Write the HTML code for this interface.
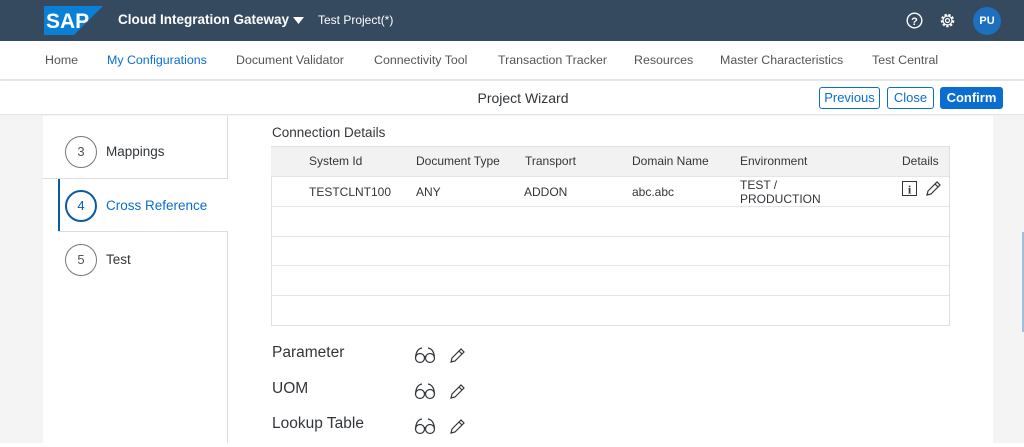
<!DOCTYPE html>
<html><head><meta charset="utf-8"><style>
*{box-sizing:border-box;margin:0;padding:0}
body{width:1024px;height:447px;overflow:hidden;font-family:"Liberation Sans",sans-serif;background:#f4f4f4;position:relative;color:#32363a}
.hdr{position:absolute;left:0;top:0;width:1024px;height:41px;background:#354a5f;color:#fff}
.nav{position:absolute;left:0;top:41px;width:1024px;height:39px;background:#fff;border-bottom:1px solid #e4e4e4;box-shadow:0 1px 2px rgba(0,0,0,.08);font-size:12.4px;color:#555}
.nav span{position:absolute;top:12px}
.ttl{position:absolute;left:0;top:81px;width:1024px;height:34px;background:#fff;border-bottom:1px solid #e4e4e4}
.btn{position:absolute;top:87px;height:22px;border:1px solid #0a6ed1;border-radius:3px;font-size:13px;color:#0a6ed1;text-align:center;line-height:20px}
.card{position:absolute;left:43px;top:116px;width:950px;height:327px;background:#fff}
.t{position:absolute;font-size:12px;color:#32363a}
.circ{position:absolute;width:32px;height:32px;border:1px solid #777;border-radius:50%;text-align:center;line-height:30px;font-size:13px;color:#555}
.row{position:absolute;left:271px;width:678px;border-bottom:1px solid #e5e5e5}
</style></head><body>
<div class="hdr">
<svg style="position:absolute;left:44px;top:6px" width="59" height="29"><polygon points="0,0 59,0 30,29 0,29" fill="#0a7fd8"/><text x="2" y="22" font-family="Liberation Sans" font-weight="bold" font-size="21" fill="#fff">SAP</text></svg>
<div style="position:absolute;left:118px;top:12px;font-size:13.5px;font-weight:bold">Cloud Integration Gateway</div>
<svg style="position:absolute;left:293px;top:17px" width="11" height="7"><polygon points="0,0 11,0 5.5,7" fill="#fff"/></svg>
<div style="position:absolute;left:318px;top:13px;font-size:12px">Test Project(*)</div>
<svg style="position:absolute;left:906px;top:12px" width="17" height="17"><circle cx="8.5" cy="8.5" r="7.3" fill="none" stroke="#fff" stroke-width="1.4"/><text x="8.5" y="13" text-anchor="middle" font-size="11" font-weight="bold" fill="#fff" font-family="Liberation Sans">?</text></svg>
<svg style="position:absolute;left:939px;top:12px" width="17" height="17"><circle cx="8.5" cy="8.5" r="5.5" fill="none" stroke="#fff" stroke-width="2.5" stroke-dasharray="2.2 1.6"/><circle cx="8.5" cy="8.5" r="4.5" fill="none" stroke="#fff" stroke-width="1.2"/><circle cx="8.5" cy="8.5" r="2" fill="none" stroke="#fff" stroke-width="1.2"/></svg>
<div style="position:absolute;left:973px;top:7px;width:28px;height:28px;border-radius:50%;background:#1d6fc0;font-size:11px;font-weight:bold;text-align:center;line-height:28px">PU</div>
</div>
<div class="nav">
<span style="left:45px">Home</span><span style="left:107px;color:#0a6ed1">My Configurations</span><span style="left:236px">Document Validator</span><span style="left:374px">Connectivity Tool</span><span style="left:498px">Transaction Tracker</span><span style="left:634px">Resources</span><span style="left:720px">Master Characteristics</span><span style="left:872px">Test Central</span>
</div>
<div class="ttl"><div style="position:absolute;left:0;width:1024px;top:9px;text-align:center;font-size:14px;color:#32363a;padding-left:22px">Project Wizard</div></div>
<div class="btn" style="left:819px;width:61px">Previous</div>
<div class="btn" style="left:887px;width:47px">Close</div>
<div class="btn" style="left:940px;width:63px;background:#0a6ed1;color:#fff;font-weight:bold">Confirm</div>
<div class="card"></div>
<div style="position:absolute;left:227px;top:116px;width:1px;height:63px;background:#ddd"></div>
<div style="position:absolute;left:227px;top:231px;width:1px;height:212px;background:#ddd"></div>
<div style="position:absolute;left:43px;top:178px;width:185px;height:1px;background:#ddd"></div>
<div style="position:absolute;left:58px;top:231px;width:170px;height:1px;background:#ddd"></div>
<div style="position:absolute;left:58px;top:179px;width:2px;height:52px;background:#0a5aa8"></div>
<div class="circ" style="left:65px;top:136px">3</div><div class="t" style="left:106px;top:144px;font-size:13.5px">Mappings</div>
<div class="circ" style="left:65px;top:190px;border:2px solid #0a5aa8;color:#0a5aa8;line-height:28px">4</div><div class="t" style="left:106px;top:198px;font-size:13.5px;color:#0a6ed1">Cross Reference</div>
<div class="circ" style="left:65px;top:244px">5</div><div class="t" style="left:106px;top:252px;font-size:13.5px">Test</div>
<div class="t" style="left:272px;top:125px;font-size:13.5px">Connection Details</div>
<div style="position:absolute;left:271px;top:146px;width:679px;height:180px;border:1px solid #e0e0e0"></div>
<div class="row" style="top:147px;height:30px;background:#f2f2f2"></div>
<div class="row" style="top:177px;height:30px"></div>
<div class="row" style="top:207px;height:30px"></div>
<div class="row" style="top:237px;height:29px"></div>
<div class="row" style="top:266px;height:30px"></div>
<div class="t" style="left:309px;top:154px">System Id</div><div class="t" style="left:416px;top:154px">Document Type</div><div class="t" style="left:525px;top:154px">Transport</div><div class="t" style="left:632px;top:154px">Domain Name</div><div class="t" style="left:740px;top:154px">Environment</div><div class="t" style="left:902px;top:154px">Details</div>
<div class="t" style="left:309px;top:185px">TESTCLNT100</div><div class="t" style="left:416px;top:185px">ANY</div><div class="t" style="left:524px;top:185px">ADDON</div><div class="t" style="left:632px;top:185px">abc.abc</div><div class="t" style="left:740px;top:178px;line-height:14px">TEST /<br>PRODUCTION</div>
<svg style="position:absolute;left:902px;top:181px" width="16" height="16"><rect x="0.5" y="0.5" width="14" height="14" fill="none" stroke="#32363a"/><text x="7.5" y="12.5" text-anchor="middle" font-size="12" font-weight="bold" font-family="Liberation Serif" fill="#32363a">i</text></svg>
<svg style="position:absolute;left:924px;top:180px" width="18" height="18"><path d="M3 15 L4 11 L13 2 L16 5 L7 14 Z M11 4 L14 7" fill="none" stroke="#32363a" stroke-width="1.2"/></svg>
<div class="t" style="left:272px;top:344px;font-size:15.5px">Parameter</div>
<div class="t" style="left:272px;top:380px;font-size:15.5px">UOM</div>
<div class="t" style="left:272px;top:415px;font-size:15.5px">Lookup Table</div>
<svg style="position:absolute;left:414px;top:344px" width="54" height="20"><g fill="none" stroke="#32363a" stroke-width="1.2"><circle cx="6" cy="14" r="4.5"/><circle cx="16" cy="14" r="4.5"/><path d="M1.5 14 Q2 5 8 4 M20.5 14 Q20 5 14 4 M10 13 Q11 12 12 13"/><path d="M37 18 L38 14 L47 5 L50 8 L41 17 Z M45 7 L48 10"/></g></svg>
<svg style="position:absolute;left:414px;top:380px" width="54" height="20"><g fill="none" stroke="#32363a" stroke-width="1.2"><circle cx="6" cy="14" r="4.5"/><circle cx="16" cy="14" r="4.5"/><path d="M1.5 14 Q2 5 8 4 M20.5 14 Q20 5 14 4 M10 13 Q11 12 12 13"/><path d="M37 18 L38 14 L47 5 L50 8 L41 17 Z M45 7 L48 10"/></g></svg>
<svg style="position:absolute;left:414px;top:415px" width="54" height="20"><g fill="none" stroke="#32363a" stroke-width="1.2"><circle cx="6" cy="14" r="4.5"/><circle cx="16" cy="14" r="4.5"/><path d="M1.5 14 Q2 5 8 4 M20.5 14 Q20 5 14 4 M10 13 Q11 12 12 13"/><path d="M37 18 L38 14 L47 5 L50 8 L41 17 Z M45 7 L48 10"/></g></svg>
<div style="position:absolute;left:1022px;top:232px;width:2px;height:100px;background:#9fbfdc"></div>
<div style="position:absolute;left:0;top:443px;width:1024px;height:4px;background:#fff"></div>
</body></html>
